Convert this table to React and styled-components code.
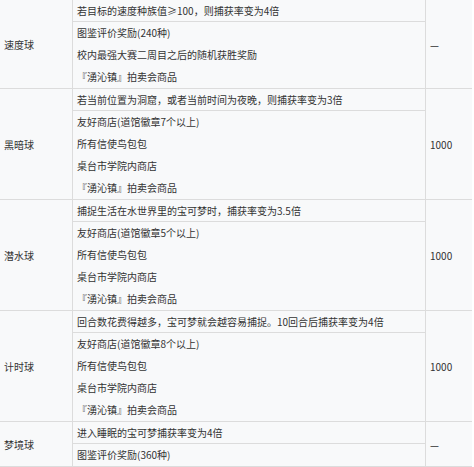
import styled, { createGlobalStyle } from "styled-components";

const GlobalStyle = createGlobalStyle`
  html, body {
    margin: 0;
    padding: 0;
    background: #ffffff;
  }
  body {
    width: 474px;
    height: 467px;
    overflow: hidden;
    font-family: "Noto Sans CJK SC", "Noto Sans", sans-serif;
    color: #333333;
  }
`;

const Table = styled.div`
  width: 472px;
  display: flex;
  flex-direction: column;
  background-color: #f8f9fa;
  font-size: 10px;
`;

const Row = styled.div`
  display: grid;
  grid-template-columns: 72px 354px 46px;
  border-bottom: 1px solid #dcdcdc;
`;

const Label = styled.div`
  display: flex;
  align-items: center;
  padding-left: 4px;
`;

const Details = styled.div`
  display: flex;
  flex-direction: column;
  border-left: 1px solid #dcdcdc;
  border-right: 1px solid #dcdcdc;
`;

const Condition = styled.div`
  height: 21px;
  line-height: 21px;
  padding-left: 4px;
  border-bottom: 1px solid #dcdcdc;
  white-space: nowrap;
`;

const Source = styled.div`
  height: 22px;
  line-height: 22px;
  padding-left: 4px;
  white-space: nowrap;
`;

const Price = styled.div`
  display: flex;
  align-items: center;
  padding-left: 4px;
`;

const balls = [
  {
    name: "速度球",
    condition: "若目标的速度种族值≥100，则捕获率变为4倍",
    sources: ["图鉴评价奖励(240种)", "校内最强大赛二周目之后的随机获胜奖励", "『湧沁镇』拍卖会商品"],
    price: "—",
  },
  {
    name: "黑暗球",
    condition: "若当前位置为洞窟，或者当前时间为夜晚，则捕获率变为3倍",
    sources: ["友好商店(道馆徽章7个以上)", "所有信使鸟包包", "桌台市学院内商店", "『湧沁镇』拍卖会商品"],
    price: "1000",
  },
  {
    name: "潜水球",
    condition: "捕捉生活在水世界里的宝可梦时，捕获率变为3.5倍",
    sources: ["友好商店(道馆徽章5个以上)", "所有信使鸟包包", "桌台市学院内商店", "『湧沁镇』拍卖会商品"],
    price: "1000",
  },
  {
    name: "计时球",
    condition: "回合数花费得越多，宝可梦就会越容易捕捉。10回合后捕获率变为4倍",
    sources: ["友好商店(道馆徽章8个以上)", "所有信使鸟包包", "桌台市学院内商店", "『湧沁镇』拍卖会商品"],
    price: "1000",
  },
  {
    name: "梦境球",
    condition: "进入睡眠的宝可梦捕获率变为4倍",
    sources: ["图鉴评价奖励(360种)"],
    price: "—",
  },
];

function App() {
  return (
    <>
      <GlobalStyle />
      <Table>
        {balls.map(ball => (
          <Row key={ball.name}>
            <Label>{ball.name}</Label>
            <Details>
              <Condition>{ball.condition}</Condition>
              {ball.sources.map((s, idx) => (
                <Source key={idx}>{s}</Source>
              ))}
            </Details>
            <Price>{ball.price}</Price>
          </Row>
        ))}
      </Table>
    </>
  );
}

export default App;
